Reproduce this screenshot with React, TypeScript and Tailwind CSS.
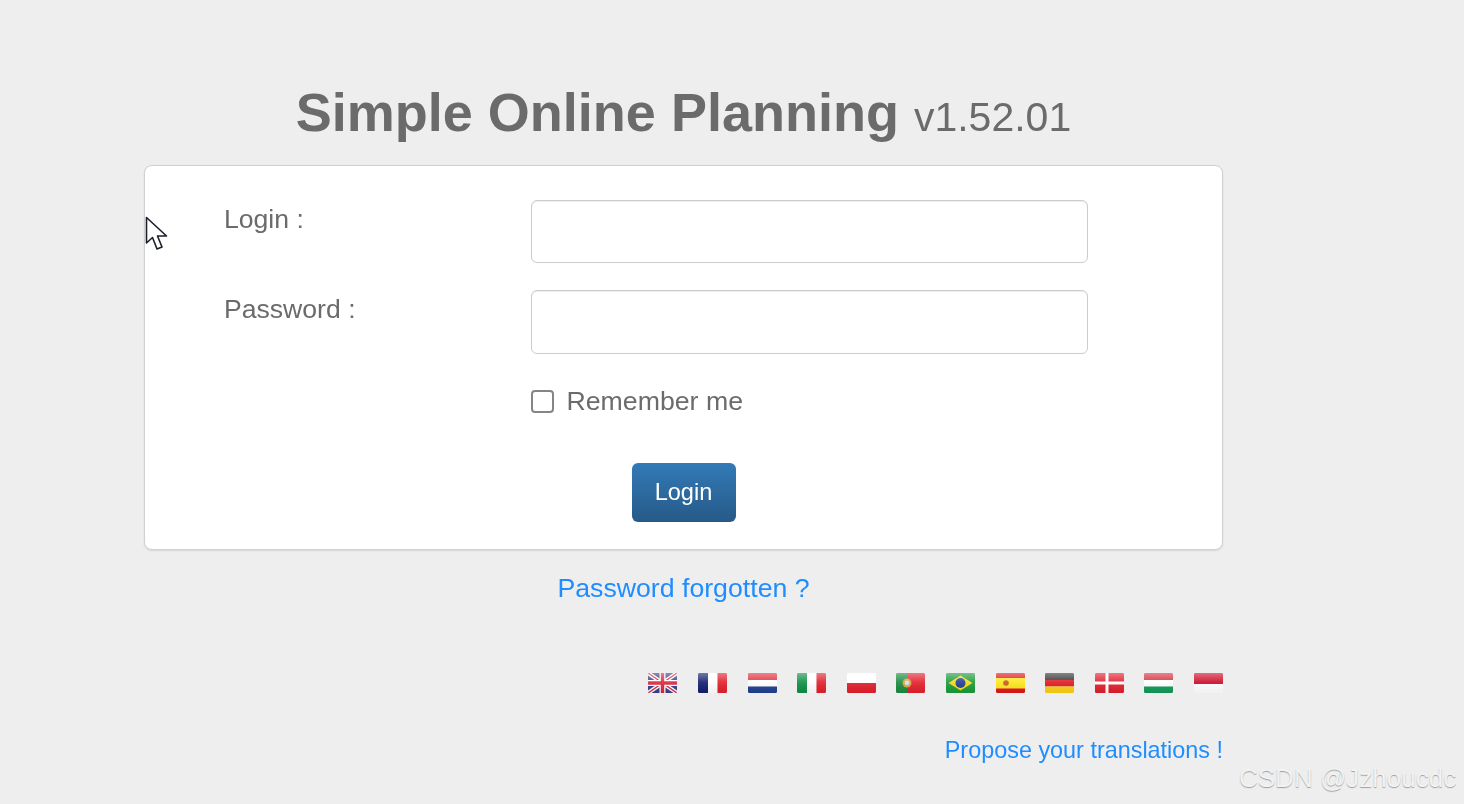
import type { ReactNode } from "react";

function Flag({ children }: { children: ReactNode }) {
  return (
    <svg width="29" height="22" viewBox="0 0 29 22" className="block" aria-hidden>
      <defs>
        <linearGradient id="gloss" x1="0" y1="0" x2="0" y2="1">
          <stop offset="0" stopColor="#fff" stopOpacity="0.4" />
          <stop offset="0.45" stopColor="#fff" stopOpacity="0.1" />
          <stop offset="1" stopColor="#000" stopOpacity="0.05" />
        </linearGradient>
        <clipPath id="flagClip">
          <rect x="0" y="1" width="29" height="20" rx="1.5" />
        </clipPath>
      </defs>
      <g clipPath="url(#flagClip)">
        {children}
        <rect x="0" y="1" width="29" height="20" fill="url(#gloss)" />
      </g>
    </svg>
  );
}

const flags: ReactNode[] = [
  // gb
  <>
    <rect y="1" width="29" height="20" fill="#3b3f8c" />
    <path d="M0 1L29 21M29 1L0 21" stroke="#fff" strokeWidth="4" />
    <path d="M0 1L29 21M29 1L0 21" stroke="#d8283c" strokeWidth="1.4" />
    <path d="M14.5 1V21M0 11H29" stroke="#fff" strokeWidth="6" />
    <path d="M14.5 1V21M0 11H29" stroke="#d8283c" strokeWidth="3.4" />
  </>,
  // fr
  <>
    <rect y="1" width="10" height="20" fill="#14206e" />
    <rect x="10" y="1" width="9.5" height="20" fill="#fff" />
    <rect x="19.5" y="1" width="9.5" height="20" fill="#e2202c" />
  </>,
  // nl
  <>
    <rect y="1" width="29" height="7" fill="#e0303c" />
    <rect y="8" width="29" height="6.5" fill="#fff" />
    <rect y="14.5" width="29" height="6.5" fill="#1f3f8f" />
  </>,
  // it
  <>
    <rect y="1" width="10" height="20" fill="#0f8f46" />
    <rect x="10" y="1" width="9.5" height="20" fill="#fff" />
    <rect x="19.5" y="1" width="9.5" height="20" fill="#e2202c" />
  </>,
  // pl
  <>
    <rect y="1" width="29" height="10" fill="#fff" />
    <rect y="11" width="29" height="10" fill="#e21f2a" />
  </>,
  // pt
  <>
    <rect y="1" width="11" height="20" fill="#1b8a3e" />
    <rect x="11" y="1" width="18" height="20" fill="#e2202c" />
    <circle cx="11" cy="11" r="4.5" fill="#d9a23a" />
    <circle cx="11" cy="11" r="2.4" fill="#d8d8e8" />
  </>,
  // br
  <>
    <rect y="1" width="29" height="20" fill="#1c9a3a" />
    <path d="M14.5 3.5L26.5 11L14.5 18.5L2.5 11Z" fill="#f4d81c" />
    <circle cx="14.5" cy="11" r="5" fill="#1f3f8f" />
  </>,
  // es
  <>
    <rect y="1" width="29" height="20" fill="#e0141c" />
    <rect y="6" width="29" height="10.5" fill="#fde81a" />
    <circle cx="10" cy="11" r="2.8" fill="#c9572a" />
  </>,
  // de
  <>
    <rect y="1" width="29" height="7" fill="#333" />
    <rect y="8" width="29" height="6.5" fill="#dd1a1f" />
    <rect y="14.5" width="29" height="6.5" fill="#fbcf14" />
  </>,
  // dk
  <>
    <rect y="1" width="29" height="20" fill="#e01f2c" />
    <path d="M12 1V21" stroke="#fff" strokeWidth="3" />
    <path d="M0 11H29" stroke="#fff" strokeWidth="3" />
  </>,
  // hu
  <>
    <rect y="1" width="29" height="7" fill="#d5303f" />
    <rect y="8" width="29" height="6.5" fill="#fff" />
    <rect y="14.5" width="29" height="6.5" fill="#119a58" />
  </>,
  // id
  <>
    <rect y="1" width="29" height="11" fill="#cc0a26" />
    <rect y="12" width="29" height="9" fill="#fff" />
  </>,
];

export default function App() {
  return (
    <div className="relative h-[804px] overflow-hidden bg-[#eeeeee] font-['Liberation_Sans',Arial,sans-serif] text-[#6b6b6b]">
      <div className="ml-[144px] w-[1079px] pt-[80px] blur-[0.4px]">
        <h1 className="text-center text-[54px] leading-[64px] font-bold">
          Simple Online Planning <span className="text-[41px] font-normal">v1.52.01</span>
        </h1>

        <div className="mt-[20px] h-[385px] rounded-[8px] border border-[#d0d0d0] bg-white pt-[34px] shadow-[0_1px_2px_rgba(0,0,0,0.1)] -translate-y-[4px]">
          <div className="flex flex-col gap-[27px]">
            <div className="flex">
              <label className="w-[386px] pl-[79px] pt-[1px] text-[26.6px] leading-[36px]">Login :</label>
              <input className="h-[63px] w-[557px] rounded-[6px] border border-[#cccccc] bg-white shadow-[inset_0_1px_1px_rgba(0,0,0,0.075)]" />
            </div>
            <div className="flex">
              <label className="w-[386px] pl-[79px] pt-[1px] text-[26.6px] leading-[36px]">Password :</label>
              <input className="h-[64px] w-[557px] rounded-[6px] border border-[#cccccc] bg-white shadow-[inset_0_1px_1px_rgba(0,0,0,0.075)]" />
            </div>
          </div>

          <div className="mt-[34px] ml-[385.5px] flex items-center gap-[13px]">
            <span className="h-[23px] w-[23px] rounded-[4px] border-2 border-[#858585] bg-white" />
            <span className="text-[26.7px] leading-[26px]">Remember me</span>
          </div>

          <div className="mt-[49px] flex justify-center">
            <button className="h-[59px] w-[104px] rounded-[6px] bg-gradient-to-b from-[#337ab7] to-[#265a88] text-[23.6px] text-white">
              Login
            </button>
          </div>
        </div>

        <div className="mt-[16px] text-center text-[26.7px] leading-[36px] text-[#1f8dff]">Password forgotten ?</div>

        <div className="mt-[66px] flex justify-end gap-[20.6px]">
          {flags.map((flag, i) => (
            <Flag key={i}>{flag}</Flag>
          ))}
        </div>

        <div className="mt-[40px] text-right text-[23.4px] leading-[32px] text-[#1f8dff]">Propose your translations !</div>
      </div>

      <svg width="24" height="36" viewBox="0 0 24 36" className="absolute top-[216px] left-[145px]" aria-hidden>
        <path
          d="M1.5 1.5V27L7.5 21.5L12 33L17 31L12.5 20H21.5Z"
          fill="#fff"
          stroke="#1a1f2a"
          strokeWidth="1.6"
          strokeLinejoin="round"
        />
      </svg>

      <div className="absolute top-[760px] left-[1239px] whitespace-nowrap text-[26px] leading-[36px] text-[#f2f2f2] [text-shadow:0_1px_1px_#a0a0a0]">
        CSDN @Jzhoucdc
      </div>
    </div>
  );
}
